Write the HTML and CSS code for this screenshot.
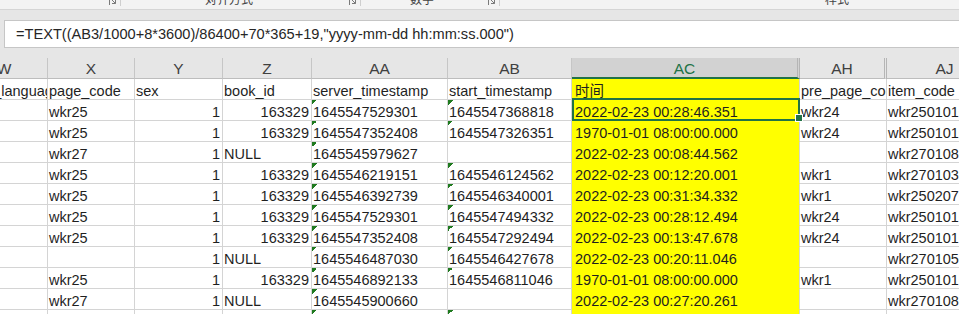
FILE: index.html
```html
<!doctype html>
<html>
<head>
<meta charset="utf-8">
<title>Sheet1 - Excel</title>
<link rel="stylesheet" href="styles.css">
</head>
<body>
<div class="ribbon">
	<div class="grp g1">
		<svg class="launch" viewBox="0 0 8 8"><path d="M0.5 8V0.5H8M2.5 2.5L6.5 6.5M3 6.5H6.5V3" /></svg>
	</div>
	<i class="sep"></i>
	<div class="grp g2">
		<span class="lbl">对齐方式</span>
		<svg class="launch" viewBox="0 0 8 8"><path d="M0.5 8V0.5H8M2.5 2.5L6.5 6.5M3 6.5H6.5V3" /></svg>
	</div>
	<i class="sep"></i>
	<div class="grp g3">
		<span class="lbl">数字</span>
		<svg class="launch" viewBox="0 0 8 8"><path d="M0.5 8V0.5H8M2.5 2.5L6.5 6.5M3 6.5H6.5V3" /></svg>
	</div>
	<i class="sep"></i>
	<div class="grp g4"><span class="lbl">样式</span></div>
</div>

<div class="fbar">
	<div class="fbox">=TEXT((AB3/1000+8*3600)/86400+70*365+19,"yyyy-mm-dd hh:mm:ss.000")</div>
</div>

<div class="sheet" id="sheet"></div>

<script>
var cols = ['W', 'X', 'Y', 'Z', 'AA', 'AB', 'AC', 'AH', 'AJ'];
var rows = [
	['user_language', 'page_code', 'sex', 'book_id', 'server_timestamp', 'start_timestamp', '时间', 'pre_page_code', 'item_code'],
	['', 'wkr25', '1', '163329', '1645547529301', '1645547368818', '2022-02-23 00:28:46.351', 'wkr24', 'wkr25010101'],
	['', 'wkr25', '1', '163329', '1645547352408', '1645547326351', '1970-01-01 08:00:00.000', 'wkr24', 'wkr25010101'],
	['', 'wkr27', '1', 'NULL', '1645545979627', '', '2022-02-23 00:08:44.562', '', 'wkr27010801'],
	['', 'wkr25', '1', '163329', '1645546219151', '1645546124562', '2022-02-23 00:12:20.001', 'wkr1', 'wkr27010301'],
	['', 'wkr25', '1', '163329', '1645546392739', '1645546340001', '2022-02-23 00:31:34.332', 'wkr1', 'wkr25020701'],
	['', 'wkr25', '1', '163329', '1645547529301', '1645547494332', '2022-02-23 00:28:12.494', 'wkr24', 'wkr25010101'],
	['', 'wkr25', '1', '163329', '1645547352408', '1645547292494', '2022-02-23 00:13:47.678', 'wkr24', 'wkr25010101'],
	['', '', '1', 'NULL', '1645546487030', '1645546427678', '2022-02-23 00:20:11.046', '', 'wkr27010501'],
	['', 'wkr25', '1', '163329', '1645546892133', '1645546811046', '1970-01-01 08:00:00.000', 'wkr1', 'wkr25010101'],
	['', 'wkr27', '1', 'NULL', '1645545900660', '', '2022-02-23 00:27:20.261', '', 'wkr27010801'],
	['', '', '', '', ' ', ' ', '', '', '']
];

var oSheet = document.getElementById('sheet');
var html = '';

// 列标
for (var i = 0; i < cols.length; i++) {
	var cls = 'hd';
	if (cols[i] == 'AC') cls += ' on';
	if (cols[i] == 'AH') cls += ' hide';
	html += '<div class="' + cls + '">' + cols[i] + '</div>';
}

for (var r = 0; r < rows.length; r++) {
	for (var c = 0; c < cols.length; c++) {
		var v = rows[r][c];
		var cls = 'c';
		if (c == 0) cls += ' w';
		if (r > 0) {
			if (c == 2 || (c == 3 && /^\d+$/.test(v))) cls += ' r';
			if ((c == 4 || c == 5) && v != '') cls += ' tri';
		}
		if (c == 6) cls += ' y';
		if (r == 1 && c == 6) cls += ' sel';
		html += '<div class="' + cls + '">' + v + '</div>';
	}
}
oSheet.innerHTML = html;
</script>
</body>
</html>
```

FILE: styles.css
```css
* { margin: 0; padding: 0; box-sizing: border-box; }
body { width: 959px; height: 314px; overflow: hidden; background: #fff; color: #1f1f1f; font-family: "Liberation Sans", "Noto Sans CJK SC", sans-serif; }

/* ribbon 底边 */
.ribbon { display: flex; height: 10px; background: #f3f3f3; border-bottom: 1px solid #d5d5d5; overflow: hidden; }
.ribbon .grp { display: flex; align-items: flex-end; height: 9px; flex: none; }
.ribbon .g1 { width: 120px; }
.ribbon .g2 { width: 239px; padding-left: 84px; }
.ribbon .g3 { width: 138px; padding-left: 49px; }
.ribbon .g4 { flex: 1; padding-left: 325px; }
.ribbon .sep { display: block; width: 1px; height: 6px; background: #cfcfcf; flex: none; }
.ribbon .lbl { font-family: "Noto Sans CJK SC", sans-serif; font-size: 12px; line-height: 16px; margin-bottom: 2px; color: #444; white-space: nowrap; }
.ribbon .launch { display: block; width: 8px; height: 8px; margin-left: auto; margin-right: 3px; margin-bottom: 4px; fill: none; stroke: #7a7a7a; stroke-width: 1; }

/* 编辑栏 */
.fbar { background: #e6e6e6; padding: 10px 0 10px 4px; }
.fbox { height: 28px; margin-right: -10px; background: #fff; border: 1px solid #c6c6c6; padding-left: 11px; font-size: 14.6px; line-height: 26px; color: #262626; white-space: nowrap; }

/* 表格 */
.sheet { display: grid; grid-template-columns: 87px 87px 88px 89px 136px 124px 228px 87px 116px; grid-auto-rows: 21px; margin-left: -39px; }
.sheet .hd { background: #e6e6e6; border-right: 1px solid #c6c6c6; border-bottom: 1px solid #bdbdbd; text-align: center; font-size: 15.5px; line-height: 16px; padding-top: 3px; color: #404040; }
.sheet .hd.on { background: #d2d2d2; color: #217346; border-right: 3px double #b5b5b5; border-bottom: 2px solid #217346; }
.sheet .hd.hide { border-right: 3px double #b5b5b5; }
.sheet .c { position: relative; border-right: 1px solid #d4d4d4; border-bottom: 1px solid #d4d4d4; font-size: 14.5px; line-height: 16px; padding: 4px 2px 0 1px; white-space: nowrap; overflow: hidden; }
.sheet .c.w { padding-left: 4px; }
.sheet .c.r { text-align: right; }
.sheet .c.tri { background: linear-gradient(to bottom right, #1f7a1f 50%, transparent 50%) no-repeat 0 0 / 5px 5px; }
.sheet .c.y { background: #ffff00; border-bottom-color: #ffff00; padding-left: 3px; }
.sheet .c.sel { overflow: visible; }
.sheet .c.sel::after { content: ""; position: absolute; top: -2px; left: 0; right: -1px; bottom: -1px; border: 2px solid #217346; }
.sheet .c.sel::before { content: ""; position: absolute; right: -4px; bottom: -2px; width: 6px; height: 6px; background: #217346; border: 1px solid #fff; z-index: 2; }
```
